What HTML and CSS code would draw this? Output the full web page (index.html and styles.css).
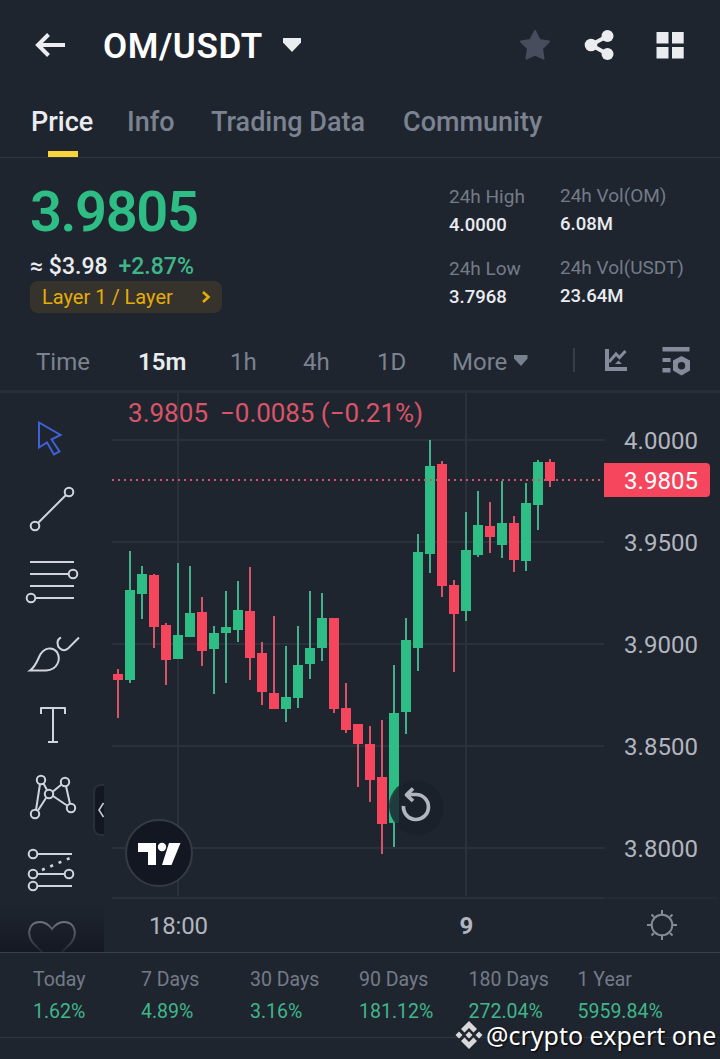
FILE: index.html
```html
<!DOCTYPE html>
<html lang="en">
<head>
<meta charset="utf-8">
<title>OM/USDT</title>
<link rel="stylesheet" href="styles.css">
</head>
<body>
<div class="app">
  <header class="header">
    <svg class="back" width="32" height="26" viewBox="34 32 32 26"><path d="M65 45H38M48.500 34.500L38 45L48.500 55.500" fill="none" stroke="#eaecef" stroke-width="4"/></svg>
    <h1 class="pair">OM/USDT</h1>
    <svg class="caret" width="20" height="16" viewBox="282 37 20 16"><path d="M283 38H301V42.500L292 52L283 42.500Z" fill="#eaecef"/></svg>
    <svg class="actions" width="170" height="40" viewBox="515 25 170 40">
      <path d="M535 31L539.500 40L549 41.500L542 48.500L543.500 58.500L535 54.500L526.500 58.500L528 48.500L521 41.500L530.500 40Z" fill="#474d5c" stroke="#474d5c" stroke-width="2" stroke-linejoin="round"/>
      <g fill="#eaecef"><path d="M607.500 36L591 45L607.500 54" fill="none" stroke="#eaecef" stroke-width="4"/><circle cx="607.500" cy="36" r="6"/><circle cx="591" cy="45" r="6.300"/><circle cx="607.500" cy="54" r="6"/>
      <path d="M656.500 32h12v11.500h-12zM672 32h11.700v11.500h-11.700zM656.500 47h12v11.500h-12zM672 47h11.700v11.500h-11.700z"/></g>
    </svg>
  </header>

  <nav class="tabs">
    <a class="tab active">Price</a><a class="tab t-info">Info</a><a class="tab t-data">Trading Data</a><a class="tab t-comm">Community</a>
  </nav>

  <section class="summary">
    <div class="quote">
      <div class="price">3.9805</div>
      <div class="sub"><span class="approx">≈ $3.98</span><span class="gain">+2.87%</span></div>
      <div class="tag"><span>Layer 1 / Layer</span><svg width="10" height="14" viewBox="0 0 10 14"><path d="M2 2L7.500 7L2 12" fill="none" stroke="#e6ac0c" stroke-width="2.600"/></svg></div>
    </div>
    <dl class="metrics first">
      <dt>24h High</dt><dd>4.0000</dd><dt>24h Low</dt><dd>3.7968</dd>
    </dl>
    <dl class="metrics second">
      <dt>24h Vol(OM)</dt><dd>6.08M</dd><dt>24h Vol(USDT)</dt><dd>23.64M</dd>
    </dl>
  </section>

  <div class="frames">
    <span class="f-time">Time</span><span class="f-15 on">15m</span><span class="f-1h">1h</span><span class="f-4h">4h</span><span class="f-1d">1D</span><span class="f-more">More</span>
    <svg class="frame-icons" width="178" height="34" viewBox="512 344 178 34">
      <path d="M514 354H527.500V357.500L521 365L514 357.500Z" fill="#76808f"/>
      <path d="M574 347V371" stroke="#363d48" stroke-width="2"/>
      <g fill="none" stroke="#848b9a" stroke-width="3"><path d="M607 348V368H627" stroke-width="4"/><path d="M609 361L616 353L619.500 356.500L625.500 350"/></g>
      <path d="M615 363L618.500 359.500L622 363Z" fill="#848b9a"/>
      <path d="M662.500 346h27v4.500h-27zM662.500 357h8v4h-8zM662.500 367h8v4.500h-8z" fill="#848b9a"/>
      <path fill-rule="evenodd" d="M681.500 355L690 359.500V369.500L681.500 374.500L673 369.500V359.500ZM681.500 361a3.700 3.700 0 1 0 0 7.400a3.700 3.700 0 1 0 0-7.400Z" fill="#848b9a"/>
    </svg>
  </div>

  <main class="chart">
    <aside class="tools">
      <svg width="104" height="559" viewBox="0 393 104 559">
        <defs><linearGradient id="fade" x1="0" y1="0" x2="0" y2="1"><stop offset="0" stop-color="#131722" stop-opacity="0"/><stop offset="1" stop-color="#131722" stop-opacity=".9"/></linearGradient></defs>
        <path d="M39 422.500L60.500 435L51.500 439.500L59.500 451.500L54 454.500L47 442.500L39 447.500Z" fill="none" stroke="#3c62d6" stroke-width="2"/>
        <g fill="none" stroke="#d1d4dc" stroke-width="2">
          <circle cx="69" cy="492" r="4.300"/><circle cx="35" cy="526" r="4.300"/><path d="M38 523L66 495"/>
          <path d="M30 562H74M30 574H69M30 586H74M35 598H74"/><circle cx="73" cy="574" r="4.300"/><circle cx="31" cy="598" r="4.300"/>
          <path d="M30 670.500C36 666 37 661 40 655C44 648 52 646 57 652C61 659 58 670 46 670.500ZM61 637.500C56 640 57 646 60 648.500Q64 652 68 648.500L79 637.500"/>
          <path d="M41 714V708H65V714M53 708V742M48 742H58" stroke-linejoin="round"/>
          <path d="M40 784L36 810M43.500 783.500L47 790M38 810.500L46 798M53 791.500L61.500 784.500M66 786L70 804M53 796L67 805.500"/>
          <circle cx="41" cy="780" r="4.200"/><circle cx="65" cy="782" r="4.200"/><circle cx="49" cy="794" r="4.200"/><circle cx="35" cy="814" r="4.200"/><circle cx="71" cy="808" r="4.200"/>
          <path d="M37 854H72M37 874H65M37 886H72"/><circle cx="33" cy="854" r="4.300"/><circle cx="33" cy="874" r="4.300"/><circle cx="69" cy="874" r="4.300"/><circle cx="33" cy="886" r="4.300"/>
          <path d="M42 870L70 858" stroke-width="2.600" stroke-dasharray="3 6"/>
          <path d="M52 962L33 943C26 934 29 922 40 922C46 922 49 925 52 929C55 925 58 922 64 922C75 922 78 934 71 943Z" stroke="#9b9fa8"/>
        </g>
        <path d="M0 905H104V952H0Z" fill="url(#fade)"/>
        <path d="M105 785H101Q94 785 94 793V827Q94 835 101 835H105" fill="#131722" stroke="#2a2e39" stroke-width="2"/>
        <path d="M103.500 803L99 810L103.500 817" fill="none" stroke="#c4c7cf" stroke-width="1.600"/>
      </svg>
    </aside>
    <svg class="plot" width="616" height="559" viewBox="104 393 616 559">
      <g class="grid">
        <path d="M112 440H604M112 542H604M112 644H604M112 746H604M112 848H604M112 898H604M178 393V896M466 393V896"/>
        <path d="M604 898H718" opacity=".4"/>
      </g>
      <g class="wick up"><path d="M130 551V683M142 566V619M178 563V659M190 566V637M214 626V694M226 591V683M238 581V642M286 646V722M298 626V708M310 591V679M322 593V661M394 665V847M406 618V734M418 534V671M430 440V573M466 512V621M478 491V557M502 481V558M526 483V571M538 460V530"/></g>
      <g class="wick down"><path d="M118 669V718M154 574V648M166 623V685M202 597V666M250 567V680M262 642V705M274 616V709M334 618V713M346 683V733M358 724V787M370 726V802M382 720V854M442 461V597M454 580V672M490 502V553M514 516V572M550 459V487"/></g>
      <g class="body up"><path d="M130 590V680M142 574V594M178 635V659M190 613V637M214 633V649M226 627V633M238 610V630M286 697V709M298 665V698M310 648V664M322 618V648M394 713V823M406 640V712M418 552V648M430 466V554M466 550V611M478 525V555M502 523V545M526 503V561M538 462V505"/></g>
      <g class="body down"><path d="M118 674V680M154 575V627M166 625V660M202 612V651M250 611V658M262 653V692M274 693V709M334 618V709M346 708V730M358 724V744M370 744V780M382 777V824M442 464V586M454 585V614M490 526V537M514 523V560M550 462V481"/></g>
      <path d="M112 480H604" stroke="#d4526a" stroke-width="2" stroke-dasharray="2 4"/>
      <text class="legend" x="128" y="422" textLength="80">3.9805</text>
      <text class="legend" x="220" y="422" textLength="203">−0.0085 (−0.21%)</text>
      <g class="axis">
        <text x="624" y="449" textLength="74">4.0000</text><text x="624" y="551" textLength="74">3.9500</text><text x="624" y="653" textLength="74">3.9000</text><text x="624" y="755" textLength="74">3.8500</text><text x="624" y="857" textLength="74">3.8000</text>
        <text x="149" y="934" textLength="59">18:00</text><text x="459.500" y="934" class="strong">9</text>
      </g>
      <path d="M604 463H706Q710 463 710 467V493Q710 497 706 497H604Z" fill="#f6465d"/>
      <text class="last" x="624" y="489" textLength="74">3.9805</text>
      <circle cx="159" cy="853" r="33" fill="#131722" stroke="#363a45" stroke-width="2"/>
      <path d="M138 843H156V865H148V852H138ZM169 843H180.500L171.500 865H162Z" fill="#fff"/><circle cx="162" cy="847" r="4.200" fill="#fff"/>
      <circle cx="417" cy="808" r="27" fill="#151a23" opacity=".3"/><circle cx="415" cy="806" r="26" fill="#1c222c" opacity=".75"/>
      <path d="M403.500 806A12.500 12.500 0 1 0 416 794.500H407M413 788.500L406.500 794.800L413 801" fill="none" stroke="#b2b5be" stroke-width="3.700" stroke-linejoin="round"/>
      <g fill="none" stroke="#868b95" stroke-width="2"><circle cx="662" cy="925" r="10.300"/><path d="M662 910V914M662 936V940M647 925H651M673 925H677M651.500 914.500L654 917M672.500 914.500L670 917M651.500 935.500L654 933M672.500 935.500L670 933"/></g>
    </svg>
  </main>

  <footer class="periods">
    <div><span>Today</span><b>1.62%</b></div>
    <div><span>7 Days</span><b>4.89%</b></div>
    <div><span>30 Days</span><b>3.16%</b></div>
    <div><span>90 Days</span><b>181.12%</b></div>
    <div><span>180 Days</span><b>272.04%</b></div>
    <div><span>1 Year</span><b>5959.84%</b></div>
  </footer>
  <div class="credit">
    <svg width="28" height="28" viewBox="0 0 28 28"><path d="M14 0L22 8L18.500 11.500L14 7L9.500 11.500L6 8ZM14 28L22 20L18.500 16.500L14 21L9.500 16.500L6 20ZM4 10.500L7.500 14L4 17.500L.5 14ZM24 10.500L27.500 14L24 17.500L20.500 14ZM14 10.500L17.500 14L14 17.500L10.500 14Z" fill="#d9d9d9"/></svg>
    <span>@crypto expert one</span>
  </div>
</div>
</body>
</html>
```
FILE: styles.css
```css
* { box-sizing: border-box; }
body { margin: 0; background: #1f252f; font-family: Roboto, "Noto Sans", sans-serif; color: #eaecef; }
.app { position: relative; width: 720px; height: 1059px; overflow: hidden; }
svg { display: block; flex: none; }
span, a, dt, dd, b { white-space: nowrap; }

.header { display: flex; align-items: center; height: 90px; padding-left: 34px; }
.pair { width: 163px; margin: 3px 16px 0 37px; font-size: 35px; line-height: 40px; font-weight: 600; letter-spacing: .6px; color: #fff; white-space: nowrap; }
.actions { margin-left: 213px; }

.tabs { display: grid; grid-template-columns: 96px 84px 192px 1fr; height: 68px; padding-left: 31px; border-bottom: 1px solid #303640; }
.tab { position: relative; font-size: 27px; line-height: 32px; padding-top: 16px; font-weight: 500; color: #7b8290; }
.tab.active { color: #eaecef; }
.tab.active::after { content: ""; position: absolute; left: 17px; bottom: 0; width: 30px; height: 6px; background: #f8d33a; }

.summary { display: flex; height: 176px; padding-left: 30px; }
.quote { width: 419px; }
.price { margin-top: 22px; height: 64px; font-size: 56px; line-height: 64px; font-weight: 600; letter-spacing: -1.400px; color: #2ebd85; }
.sub { display: flex; gap: 11px; margin-top: 8px; height: 29px; font-size: 23px; line-height: 29px; font-weight: 500; }
.gain { color: #3fb68a; }
.tag { display: flex; align-items: center; justify-content: space-between; width: 192px; height: 32px; padding: 0 11px 0 12px; border-radius: 8px; background: #35332b; color: #e6ac0c; font-size: 20px; line-height: 30px; }
.metrics { margin: 0; font-size: 19px; line-height: 26px; }
.first { width: 111px; padding-top: 26px; }
.second { padding-top: 25px; }
.metrics dt { color: #747b88; height: 28px; }
.metrics dd { margin: 0; height: 44px; font-weight: 500; font-size: 18.500px; }

.frames { display: grid; grid-template-columns: 102px 92px 73px 74px 75px 60px 1fr; align-items: center; height: 56px; padding-left: 36px; color: #7b8290; font-size: 24px; }
.frames .on { color: #eaecef; font-weight: 600; }
.frames span { padding-top: 0; }

.chart { display: flex; height: 562px; border-top: 3px solid #272e38; }
.tools { width: 104px; }
.grid { fill: none; stroke: #2a313b; stroke-width: 2; }
.wick { stroke-width: 2; }
.body { stroke-width: 10; }
.wick.up { stroke: #43b08b; }
.wick.down { stroke: #d8526a; }
.body.up { stroke: #2ebd85; }
.body.down { stroke: #f6465d; }
.legend { fill: #d95468; font-size: 26px; }
.axis { fill: #b2b5be; font-size: 24px; }
.strong { font-weight: 700; }
.last { fill: #fff; font-size: 24px; }

.periods { display: grid; grid-template-columns: 108px 109px 109px 109.500px 109px 1fr; height: 86px; padding: 14px 0 0 33px; border-top: 1px solid #3a404a; border-bottom: 1px solid #303640; }
.periods span, .periods b { display: block; height: 32px; font-size: 19.500px; line-height: 26px; font-weight: 400; color: #747b88; }
.periods b { color: #3fb68a; }

.credit { position: absolute; left: 455px; top: 1019px; display: flex; align-items: center; gap: 3px; height: 32px; font-family: "Noto Sans", sans-serif; font-size: 25px; color: #fff; text-shadow: 1px 1px 2px #000; }
```
